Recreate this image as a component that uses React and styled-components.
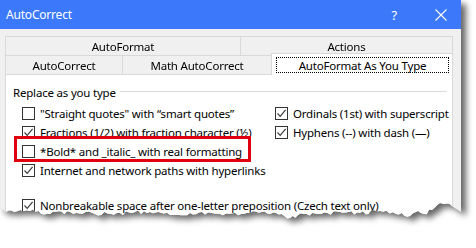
import React from 'react';
import styled, { createGlobalStyle } from 'styled-components';

const GlobalStyle = createGlobalStyle`
    html, body {
        margin: 0;
        padding: 0;
        background: #ffffff;
    }
    body {
        width: 476px;
        height: 248px;
        overflow: hidden;
        font-family: "Noto Sans", "Open Sans", sans-serif;
        font-size: 11.5px;
        letter-spacing: -0.2px;
    }
`;

// jagged torn edge along the bottom of the dialog
const tornEdge = () => {
    const pts = ['0px 0px', '461px 0px', '461px 212px'];
    let seed = 7;
    const rnd = () => {
        seed = (seed * 9301 + 49297) % 233280;
        return seed / 233280;
    };
    const bumps = [
        [461, 212], [452, 206], [444, 204], [440, 203], [432, 210], [424, 214], [418, 211],
        [410, 216], [396, 214], [380, 211], [360, 213], [340, 212], [318, 214], [298, 215],
        [290, 218], [276, 213], [250, 213], [220, 214], [190, 213], [170, 215], [150, 212],
        [120, 213], [95, 214], [70, 212], [50, 214], [30, 211], [14, 212], [0, 210],
    ];
    for (let i = 1; i < bumps.length; i++) {
        const [x0, y0] = bumps[i - 1];
        const [x1, y1] = bumps[i];
        const steps = Math.max(1, Math.round((x0 - x1) / 3));
        for (let s = 1; s <= steps; s++) {
            const t = s / steps;
            const x = x0 + (x1 - x0) * t;
            const y = y0 + (y1 - y0) * t + (s === steps ? 0 : (rnd() - 0.5) * 4);
            pts.push(`${x.toFixed(1)}px ${y.toFixed(1)}px`);
        }
    }
    return `polygon(${pts.join(', ')})`;
};

const CheckBox = ({ checked }) => (
    <Box>
        {checked && (
            <svg width="11" height="11" viewBox="0 0 11 11" fill="none">
                <path d="M1.5 5.5 L4.2 8.3 L9.6 1.8" stroke="#3c3c3c" strokeWidth="1.2" />
            </svg>
        )}
    </Box>
);

const Option = ({ checked, children }) => (
    <OptionRow>
        <CheckBox checked={checked} />
        <span>{children}</span>
    </OptionRow>
);

export default function App() {
    return (
        <>
            <GlobalStyle />
            <Shadow>
                <Dialog style={{ clipPath: tornEdge() }}>
                    <TitleBar>
                        <Title>AutoCorrect</Title>
                        <TitleButtons>
                            <Help>?</Help>
                            <svg width="12" height="12" viewBox="0 0 12 12">
                                <path d="M0.5 0.5 L11.5 11.5 M11.5 0.5 L0.5 11.5" stroke="#fff" strokeWidth="1.1" />
                            </svg>
                        </TitleButtons>
                    </TitleBar>
                    <Body>
                        <TabRow>
                            <Tab grow={235}>AutoFormat</Tab>
                            <Tab grow={213} last>Actions</Tab>
                        </TabRow>
                        <TabRow>
                            <Tab grow={117}>AutoCorrect</Tab>
                            <Tab grow={149}>Math AutoCorrect</Tab>
                            <ActiveTab>
                                <Focus>AutoFormat As You Type</Focus>
                            </ActiveTab>
                        </TabRow>
                        <Panel>
                            <Group>
                                <GroupLabel>Replace as you type</GroupLabel>
                                <GroupLine />
                            </Group>
                            <OptionGrid>
                                <Option>"Straight quotes" with “smart quotes”</Option>
                                <Option checked>Ordinals (1st) with superscript</Option>
                                <Option checked>Fractions (1/2) with fraction character (½)</Option>
                                <Option checked>Hyphens (--) with dash (—)</Option>
                                <Option>*Bold* and _italic_ with real formatting</Option>
                                <span />
                                <Option checked>Internet and network paths with hyperlinks</Option>
                            </OptionGrid>
                            <Highlight />
                            <Spacer />
                            <Option checked>Nonbreakable space after one-letter preposition (Czech text only)</Option>
                        </Panel>
                    </Body>
                </Dialog>
            </Shadow>
        </>
    );
}

const Shadow = styled.div`
    width: 461px;
    height: 226px;
    filter: drop-shadow(5px 4px 3px rgba(0, 0, 0, 0.6));
`;

const Dialog = styled.div`
    width: 461px;
    height: 226px;
    background: #f0f0f0;
    display: flex;
    flex-direction: column;
`;

const TitleBar = styled.div`
    height: 29px;
    background: #3b78fa;
    display: flex;
    align-items: center;
    justify-content: space-between;
    padding: 0 14px 0 6px;
    flex-shrink: 0;
`;

const Title = styled.div`
    color: #fff;
    font-size: 12px;
    margin-top: -1px;
`;

const TitleButtons = styled.div`
    display: flex;
    align-items: center;
    gap: 38px;
`;

const Help = styled.span`
    color: #fff;
    font-size: 13px;
`;

const Body = styled.div`
    padding: 7px 8px 0 5px;
    display: flex;
    flex-direction: column;
    flex: 1;
`;

const TabRow = styled.div`
    display: flex;
    height: 19px;
    position: relative;
`;

const Tab = styled.div`
    width: ${({ grow }) => grow}px;
    box-sizing: border-box;
    border: 1px solid #d9d9d9;
    border-right: ${({ last }) => (last ? '1px solid #d9d9d9' : 'none')};
    border-bottom: none;
    display: flex;
    align-items: center;
    justify-content: center;
    color: #000;
    background: #f0f0f0;
`;

const ActiveTab = styled.div`
    flex: 1;
    margin-top: -2px;
    height: 22px;
    box-sizing: border-box;
    border: 1px solid #d9d9d9;
    border-bottom: none;
    background: #fff;
    position: relative;
    z-index: 1;
    padding: 3px 3px 2px 4px;
    display: flex;
`;

const Focus = styled.div`
    flex: 1;
    border: 1px dotted #000;
    display: flex;
    align-items: center;
    justify-content: center;
    color: #000;
`;

const Panel = styled.div`
    flex: 1;
    background: #fff;
    border: 1px solid #d9d9d9;
    padding: 8px 0 0 16px;
    position: relative;
`;

const Group = styled.div`
    display: flex;
    align-items: center;
    gap: 4px;
    margin-left: -9px;
    padding-right: 5px;
    height: 18px;
`;

const GroupLabel = styled.span`
    color: #000;
`;

const GroupLine = styled.div`
    flex: 1;
    height: 1px;
    background: #dcdcdc;
    margin-top: -2px;
`;

const OptionGrid = styled.div`
    display: grid;
    grid-template-columns: 253px 1fr;
    margin-top: 3px;
`;

const OptionRow = styled.div`
    display: flex;
    align-items: center;
    gap: 5px;
    height: 19px;
    color: #000;
    white-space: nowrap;
`;

const Box = styled.div`
    width: 13px;
    height: 13px;
    box-sizing: border-box;
    border: 1px solid #333;
    background: #fff;
    display: flex;
    align-items: center;
    justify-content: center;
    flex-shrink: 0;
`;

const Highlight = styled.div`
    position: absolute;
    left: 8px;
    top: 61px;
    width: 237px;
    height: 26px;
    box-sizing: border-box;
    border: 3px solid #e1000f;
`;

const Spacer = styled.div`
    height: 16px;
`;
